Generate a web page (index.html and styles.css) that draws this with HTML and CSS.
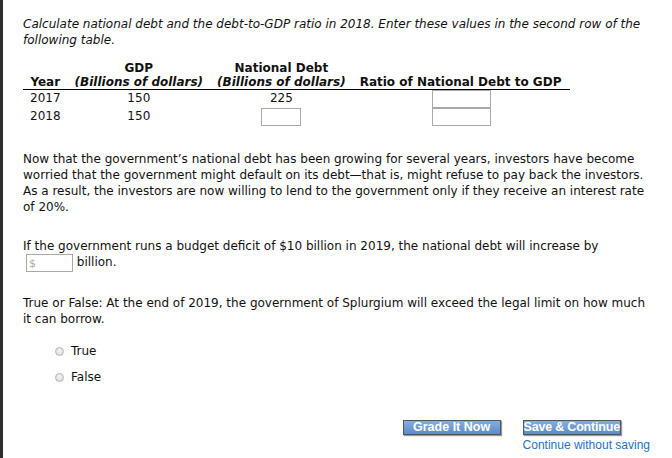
FILE: index.html
```html
<!DOCTYPE html>
<html lang="en">
<head>
    <meta charset="UTF-8">
    <meta name="viewport" content="width=device-width, initial-scale=1.0">
    <title>National Debt</title>
    <link rel="stylesheet" href="styles.css">
</head>
<body>
    <div class="question">
        <p class="prompt">Calculate national debt and the debt-to-GDP ratio in 2018. Enter these values in the second row of the following table.</p>

        <table class="debt-table">
            <thead>
                <tr>
                    <th></th>
                    <th>GDP</th>
                    <th>National Debt</th>
                    <th></th>
                </tr>
                <tr class="head-last">
                    <th>Year</th>
                    <th><em>(Billions of dollars)</em></th>
                    <th><em>(Billions of dollars)</em></th>
                    <th>Ratio of National Debt to GDP</th>
                </tr>
            </thead>
            <tbody>
                <tr>
                    <td>2017</td>
                    <td>150</td>
                    <td>225</td>
                    <td><input type="text" class="box box-wide"></td>
                </tr>
                <tr>
                    <td>2018</td>
                    <td>150</td>
                    <td><input type="text" class="box"></td>
                    <td><input type="text" class="box box-wide"></td>
                </tr>
            </tbody>
        </table>

        <p class="story">Now that the government’s national debt has been growing for several years, investors have become worried that the government might default on its debt—that is, might refuse to pay back the investors. As a result, the investors are now willing to lend to the government only if they receive an interest rate of 20%.</p>

        <p class="fill">If the government runs a budget deficit of $10 billion in 2019, the national debt will increase by<br>
            <input type="text" class="box box-dollar" placeholder="$"> billion.</p>

        <p class="tf">True or False: At the end of 2019, the government of Splurgium will exceed the legal limit on how much it can borrow.</p>

        <!-- answer choices -->
        <ul class="choices">
            <li><span class="radio"></span>True</li>
            <li><span class="radio"></span>False</li>
        </ul>

        <div class="actions">
            <button type="button" class="btn">Grade It Now</button>
            <div class="save-col">
                <button type="button" class="btn btn-save">Save &amp; Continue</button>
                <a href="#" class="skip">Continue without saving</a>
            </div>
        </div>
    </div>
</body>
</html>
```

FILE: styles.css
```css
html, body {
    height: 100%;
}

body {
    margin: 0;
    padding: 0;
    font-family: "DejaVu Sans", Verdana, sans-serif;
    font-size: 12px;
    line-height: 16px;
    color: #111;
    background: #fff;
    border-left: 3px solid #2e2e2e;
    box-sizing: border-box;
}

.question {
    padding: 16px 0 0 20px;
    width: 628px;
}

p {
    margin: 0;
}

.prompt {
    font-style: italic;
}

.debt-table {
    margin-top: 13px;
    border-collapse: collapse;
    border-spacing: 0;
}

.debt-table th,
.debt-table td {
    padding: 0 7px;
    text-align: center;
    line-height: 14px;
    white-space: nowrap;
}

.debt-table th {
    font-weight: bold;
}

.debt-table th:last-child {
    padding-right: 9px;
}

.head-last th {
    border-bottom: 1px solid #000;
}

.debt-table td {
    height: 18px;
    vertical-align: top;
    line-height: 16px;
}

.box {
    box-sizing: border-box;
    width: 40px;
    height: 18px;
    margin: 0;
    padding: 0 2px;
    border: 1px solid #a9a9a9;
    font-family: "DejaVu Sans", Verdana, sans-serif;
    font-size: 11px;
    vertical-align: top;
}

.box-wide {
    width: 59px;
}

.story {
    margin-top: 25px;
}

.fill {
    margin-top: 23px;
}

.box-dollar {
    width: 47px;
    margin-left: 3px;
    vertical-align: top;
}

.box-dollar::placeholder {
    color: #aaa;
}

.tf {
    margin-top: 23px;
}

.choices {
    list-style: none;
    margin: 11px 0 0 0;
    padding: 0 0 0 32px;
}

.choices li {
    height: 26px;
    display: flex;
    align-items: center;
}

.radio {
    width: 7px;
    height: 7px;
    border: 1px solid #b5b5b5;
    border-radius: 50%;
    background: radial-gradient(circle at 50% 40%, #f4f4f4, #d6d6d6);
    margin-right: 7px;
}

.actions {
    display: flex;
    justify-content: flex-end;
    gap: 22px;
    margin-top: 30px;
    padding-right: 1px;
}

.save-col {
    display: flex;
    flex-direction: column;
    align-items: flex-start;
}

.btn {
    height: 15px;
    padding: 0;
    width: 98px;
    font-family: "Liberation Sans", Arial, sans-serif;
    font-weight: bold;
    font-size: 12.5px;
    line-height: 13px;
    white-space: nowrap;
    overflow: visible;
    color: #fff;
    background: linear-gradient(#86aee0, #5a8cc8);
    border: 1px solid #555;
    box-shadow: 1px 1px 1px #999;
    cursor: pointer;
}

.btn-save {
    letter-spacing: -0.2px;
}

.skip {
    margin-top: 3px;
    font-family: "Liberation Sans", Arial, sans-serif;
    font-size: 12px;
    line-height: 14px;
    color: #1a73c9;
    text-decoration: none;
}
```
